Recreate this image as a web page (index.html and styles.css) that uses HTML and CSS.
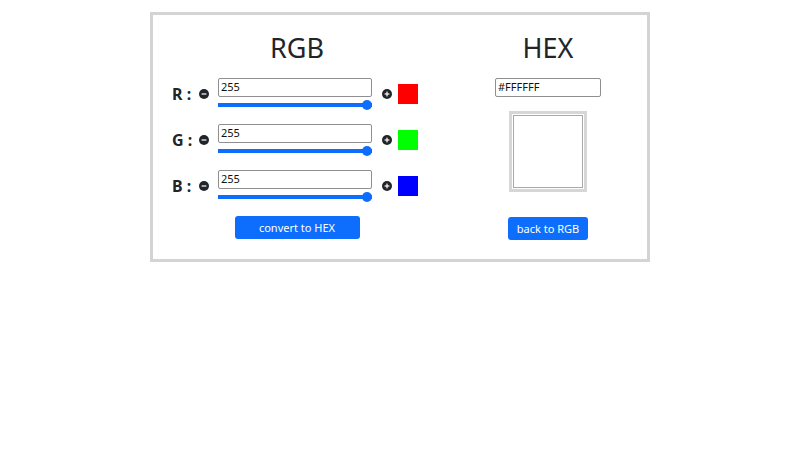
FILE: index.html
```html
<!DOCTYPE html>
<html>
<head>
<meta charset="utf-8">
<link rel="stylesheet" href="styles.css">
</head>
<body>
<div class="card">
  <div class="col-rgb">
    <h3 class="title">RGB</h3>
    <div class="rows">
      <div class="row">
        <span class="label">R :</span>
        <svg class="icon" viewBox="0 0 10 10"><circle cx="5" cy="5" r="5" fill="#212529"/><rect x="2.6" y="4.4" width="4.8" height="1.2" fill="#fff"/></svg>
        <div class="ctrl">
          <input class="num" type="text" value="255">
          <div class="slider"><div class="thumb"></div></div>
        </div>
        <svg class="icon plus" viewBox="0 0 10 10"><circle cx="5" cy="5" r="5" fill="#212529"/><rect x="2.6" y="4.4" width="4.8" height="1.2" fill="#fff"/><rect x="4.4" y="2.6" width="1.2" height="4.8" fill="#fff"/></svg>
        <div class="swatch red"></div>
      </div>
      <div class="row">
        <span class="label">G :</span>
        <svg class="icon" viewBox="0 0 10 10"><circle cx="5" cy="5" r="5" fill="#212529"/><rect x="2.6" y="4.4" width="4.8" height="1.2" fill="#fff"/></svg>
        <div class="ctrl">
          <input class="num" type="text" value="255">
          <div class="slider"><div class="thumb"></div></div>
        </div>
        <svg class="icon plus" viewBox="0 0 10 10"><circle cx="5" cy="5" r="5" fill="#212529"/><rect x="2.6" y="4.4" width="4.8" height="1.2" fill="#fff"/><rect x="4.4" y="2.6" width="1.2" height="4.8" fill="#fff"/></svg>
        <div class="swatch green"></div>
      </div>
      <div class="row">
        <span class="label">B :</span>
        <svg class="icon" viewBox="0 0 10 10"><circle cx="5" cy="5" r="5" fill="#212529"/><rect x="2.6" y="4.4" width="4.8" height="1.2" fill="#fff"/></svg>
        <div class="ctrl">
          <input class="num" type="text" value="255">
          <div class="slider"><div class="thumb"></div></div>
        </div>
        <svg class="icon plus" viewBox="0 0 10 10"><circle cx="5" cy="5" r="5" fill="#212529"/><rect x="2.6" y="4.4" width="4.8" height="1.2" fill="#fff"/><rect x="4.4" y="2.6" width="1.2" height="4.8" fill="#fff"/></svg>
        <div class="swatch blue"></div>
      </div>
    </div>
    <button class="btn btn-convert">convert to HEX</button>
  </div>
  <div class="col-hex">
    <h3 class="title">HEX</h3>
    <input class="hex" type="text" value="#FFFFFF">
    <div class="preview"></div>
    <button class="btn btn-back">back to RGB</button>
  </div>
</div>
</body>
</html>
```
FILE: styles.css
```css
* { box-sizing: border-box; }
body {
  margin: 0;
  font-family: "Noto Sans", "DejaVu Sans", sans-serif;
  color: #212529;
  background: #fff;
}
.card {
  width: 500px;
  height: 250px;
  margin: 12px auto 0;
  border: 3px solid #d4d4d4;
  display: flex;
}
.col-rgb {
  width: 288px;
  display: flex;
  flex-direction: column;
  align-items: center;
  padding-top: 16px;
}
.col-hex {
  flex: 1;
  padding-left: 8px;
  padding-top: 16px;
  display: flex;
  flex-direction: column;
  align-items: center;
}
.title {
  margin: 0;
  font-size: 27px;
  font-weight: 400;
  line-height: 34px;
}
.rows {
  margin-top: 13px;
  display: flex;
  flex-direction: column;
  gap: 14px;
  align-self: flex-start;
  padding-left: 19px;
}
.row {
  display: flex;
  align-items: center;
}
.label {
  width: 24px;
  font-weight: 700;
  font-size: 16px;
  line-height: 20px;
  margin-right: 3px;
  white-space: nowrap;
}
.icon {
  width: 10px;
  height: 10px;
  display: block;
  margin-right: 9px;
}
.icon.plus {
  margin-left: 10px;
  margin-right: 6px;
}
.ctrl {
  display: flex;
  flex-direction: column;
  gap: 3px;
  width: 154px;
}
.num, .hex {
  height: 19px;
  border: 1px solid #8f8f8f;
  border-radius: 2px;
  font-family: "Noto Sans", "DejaVu Sans", sans-serif;
  font-size: 11px;
  color: #111;
  padding: 0 2px 2px;
  margin: 0;
  outline: none;
  background: #fff;
}
.num { width: 154px; }
.slider {
  height: 10px;
  display: flex;
  align-items: center;
  justify-content: flex-end;
  background: linear-gradient(#0d6efd, #0d6efd) no-repeat center / 100% 4px;
  border-radius: 2px;
}
.thumb {
  width: 10px;
  height: 10px;
  border-radius: 50%;
  background: #0d6efd;
}
.swatch {
  width: 20px;
  height: 20px;
}
.red { background: #ff0000; }
.green { background: #00ff00; }
.blue { background: #0000ff; }
.btn {
  border: none;
  background: #0d6efd;
  color: #fff;
  font-family: "Noto Sans", "DejaVu Sans", sans-serif;
  font-size: 11px;
  border-radius: 3px;
  height: 23px;
  padding: 0;
}
.btn-convert {
  width: 125px;
  margin-top: 14px;
}
.hex {
  width: 106px;
  margin-top: 13px;
}
.preview {
  width: 78px;
  height: 81px;
  margin-top: 14px;
  border: 3px solid #d6d6d6;
  box-shadow: inset 0 0 0 1px #fff, inset 0 0 0 2px #a9a9a9;
}
.btn-back {
  width: 80px;
  margin-top: 25px;
}
```
